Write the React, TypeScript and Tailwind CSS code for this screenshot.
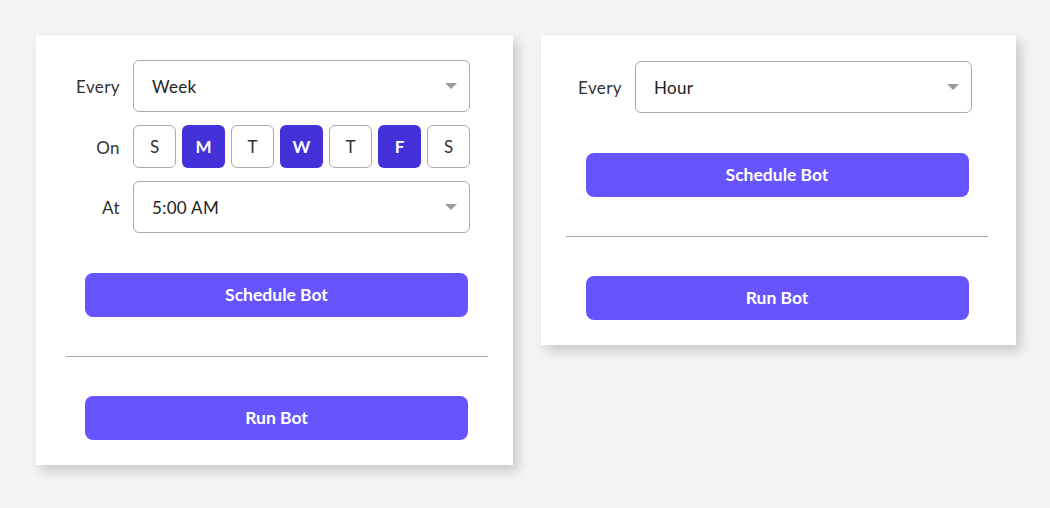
import React from "react";

const days = [
  { d: "S", on: false },
  { d: "M", on: true },
  { d: "T", on: false },
  { d: "W", on: true },
  { d: "T", on: false },
  { d: "F", on: true },
  { d: "S", on: false },
];

function Caret() {
  return (
    <svg width="12" height="6" viewBox="0 0 12 6" className="shrink-0">
      <path d="M0 0 L12 0 L6 6 Z" fill="#9a9a9a" />
    </svg>
  );
}

function Dropdown({ value }: { value: string }) {
  return (
    <div className="flex h-[52px] w-[337px] items-center justify-between rounded-[6px] border border-[#ababab] bg-white pl-[18px] pr-[12px] text-[17px] tracking-[0.3px] text-[#222]">
      <span className="pt-[2px]">{value}</span>
      <Caret />
    </div>
  );
}

function Label({ children }: { children: React.ReactNode }) {
  return (
    <div className="pt-[2px] text-right text-[17px] tracking-[0.4px] text-[#333]">
      {children}
    </div>
  );
}

function Actions({ gapTop }: { gapTop: string }) {
  return (
    <div className={`flex flex-col items-center ${gapTop}`}>
      <button className="h-[44px] w-[383px] rounded-[8px] bg-[#6655ff] text-[17.5px] font-bold text-white">
        Schedule Bot
      </button>
      <div className="my-[39px] h-px w-[422px] bg-[#a6a6a6]" />
      <button className="h-[44px] w-[383px] rounded-[8px] bg-[#6655ff] text-[17.5px] font-bold text-white">
        Run Bot
      </button>
    </div>
  );
}

export default function App() {
  return (
    <div
      className="flex min-h-[508px] items-start gap-[28px] bg-[#f4f4f4] pl-[36px] pt-[35px]"
      style={{ fontFamily: "Lato, 'Open Sans', sans-serif" }}
    >
      {/* weekly */}
      <div className="w-[477px] bg-white pb-[25px] pt-[25px] shadow-[5px_6px_11px_rgba(0,0,0,0.18)]">
        <div className="grid grid-cols-[44px_337px] items-center justify-center gap-x-[13px] gap-y-[13px] pr-[3px]">
          <Label>Every</Label>
          <Dropdown value="Week" />
          <Label>On</Label>
          <div className="flex gap-[6px]">
            {days.map((x, i) => (
              <div
                key={i}
                className={
                  x.on
                    ? "flex h-[43px] w-[43px] items-center justify-center rounded-[6px] bg-[#4431da] pt-[1px] text-[17px] font-bold text-white"
                    : "flex h-[43px] w-[43px] items-center justify-center rounded-[6px] border border-[#ababab] bg-white pt-[1px] text-[17px] text-[#333]"
                }
              >
                {x.d}
              </div>
            ))}
          </div>
          <Label>At</Label>
          <Dropdown value="5:00 AM" />
        </div>
        <Actions gapTop="mt-[40px] pl-[4px]" />
      </div>

      {/* hourly */}
      <div className="w-[475px] bg-white pb-[25px] pt-[26px] shadow-[5px_6px_11px_rgba(0,0,0,0.18)]">
        <div className="grid grid-cols-[44px_337px] items-center justify-center gap-x-[13px] pr-[7px]">
          <Label>Every</Label>
          <Dropdown value="Hour" />
        </div>
        <Actions gapTop="mt-[40px] pr-[3px]" />
      </div>
    </div>
  );
}
